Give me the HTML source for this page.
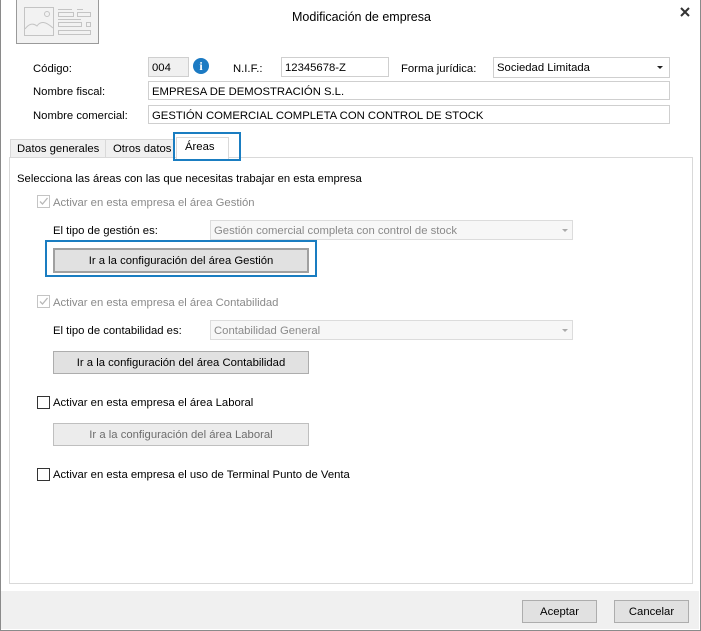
<!DOCTYPE html>
<html><head><meta charset="utf-8"><style>
*{box-sizing:border-box;margin:0;padding:0}
body{width:701px;height:631px;position:relative;background:#fff;font-family:"Segoe UI","Liberation Sans",sans-serif;font-size:11.3px;color:#000;overflow:hidden}
.a{position:absolute;white-space:nowrap}
.t{transform:translateY(2px)}
.in{position:absolute;border:1px solid #cfcfcf;background:#fff;padding:3px 3px 0;line-height:15px;white-space:nowrap}
.btn{position:absolute;border:1px solid #adadad;background:#e1e1e1;text-align:center;padding-top:1px}
.cb{position:absolute;width:13px;height:13px;border:1px solid #333;background:#fff}
.cbd{border-color:#c4c4c4}
.g{color:#8a8a8a}
.ck{position:absolute}
</style></head><body>
<div class="a" style="left:0;top:0;width:701px;height:631px;border:1px solid #8a8a8a;border-top:none"></div>
<div class="a" style="left:16px;top:-1px;width:83px;height:45px;border:1px solid #9a9a9a;background:#f2f2f2"></div>
<svg class="a" style="left:16px;top:0" width="83" height="44" viewBox="0 0 83 44">
<g fill="none" stroke="#c4c4c4" stroke-width="1">
<rect x="8.5" y="7.5" width="29" height="28"/>
<circle cx="31" cy="14" r="2.5"/>
<path d="M9 29 Q15 21 21 26 Q26 18 37 28"/>
<rect x="42.5" y="12.5" width="15" height="4"/><rect x="61.5" y="12.5" width="13" height="4"/>
<path d="M42 9.5h14M61 9.5h6"/>
<rect x="42.5" y="22.5" width="23" height="4"/><rect x="70.5" y="22.5" width="4" height="4"/>
<path d="M42 19.5h23"/>
<rect x="42.5" y="30.5" width="32" height="4"/>
</g></svg>
<div class="a t" style="left:292px;top:8px;font-size:12.5px">Modificación de empresa</div>
<svg class="a" style="left:680px;top:7px" width="10" height="10" viewBox="0 0 10 10"><path d="M1 1L9 9M9 1L1 9" stroke="#333" stroke-width="2"/></svg>

<div class="a t" style="left:33px;top:61px">Código:</div>
<div class="in" style="left:148px;top:57px;width:41px;height:20px;background:#f0f0f0">004</div>
<div class="a" style="left:193px;top:58px;width:16px;height:16px;border-radius:50%;background:#1b7ac3;color:#fff;font-weight:bold;font-size:12px;text-align:center;line-height:16px;font-family:'Liberation Serif',serif">i</div>
<div class="a t" style="left:233px;top:61px">N.I.F.:</div>
<div class="in" style="left:281px;top:57px;width:108px;height:20px">12345678-Z</div>
<div class="a t" style="left:401px;top:61px">Forma jurídica:</div>
<div class="in" style="left:493px;top:57px;width:177px;height:21px">Sociedad Limitada</div>
<div class="a" style="left:657px;top:66px;width:0;height:0;border-left:3px solid transparent;border-right:3px solid transparent;border-top:3px solid #222"></div>
<div class="a t" style="left:33px;top:84px">Nombre fiscal:</div>
<div class="in" style="left:148px;top:81px;width:522px;height:19px">EMPRESA DE DEMOSTRACIÓN S.L.</div>
<div class="a t" style="left:33px;top:108px">Nombre comercial:</div>
<div class="in" style="left:148px;top:105px;width:522px;height:19px">GESTIÓN COMERCIAL COMPLETA CON CONTROL DE STOCK</div>

<div class="a" style="left:9px;top:157px;width:684px;height:427px;border:1px solid #d9d9d9;background:#fff"></div>
<div class="a" style="left:10px;top:139px;width:96px;height:19px;border:1px solid #d9d9d9;background:#f0f0f0;padding:3px 0 0 6px">Datos generales</div>
<div class="a" style="left:105px;top:139px;width:70px;height:19px;border:1px solid #d9d9d9;background:#f0f0f0;padding:3px 0 0 7px">Otros datos</div>
<div class="a" style="left:176px;top:137px;width:53px;height:22px;border:1px solid #d9d9d9;border-bottom:none;background:#fff;padding:3px 0 0 8px">Áreas</div>
<div class="a" style="left:173px;top:132px;width:68px;height:29px;border:2px solid #1a7dc1"></div>

<div class="a t" style="left:17px;top:171px">Selecciona las áreas con las que necesitas trabajar en esta empresa</div>
<div class="cb cbd" style="left:37px;top:195px"></div>
<svg class="ck" style="left:37px;top:195px" width="13" height="13"><path d="M3 6.5L5.5 9L10.5 3" fill="none" stroke="#b8b8b8" stroke-width="1.3"/></svg>
<div class="a g t" style="left:53px;top:195px">Activar en esta empresa el área Gestión</div>
<div class="a t" style="left:53px;top:223px">El tipo de gestión es:</div>
<div class="in g" style="left:210px;top:220px;width:363px;height:20px;background:#f7f7f7;border-color:#dcdcdc">Gestión comercial completa con control de stock</div>
<div class="a" style="left:562px;top:229px;border-left:3px solid transparent;border-right:3px solid transparent;border-top:3px solid #aaa"></div>
<div class="a" style="left:45px;top:240px;width:272px;height:37px;border:2px solid #1a7dc1"></div>
<div class="btn" style="left:53px;top:248px;width:256px;height:25px;border:2px solid #a0a0a0;line-height:20px">Ir a la configuración del área Gestión</div>

<div class="cb cbd" style="left:37px;top:295px"></div>
<svg class="ck" style="left:37px;top:295px" width="13" height="13"><path d="M3 6.5L5.5 9L10.5 3" fill="none" stroke="#b8b8b8" stroke-width="1.3"/></svg>
<div class="a g t" style="left:53px;top:295px">Activar en esta empresa el área Contabilidad</div>
<div class="a t" style="left:53px;top:323px">El tipo de contabilidad es:</div>
<div class="in g" style="left:210px;top:320px;width:363px;height:20px;background:#f7f7f7;border-color:#dcdcdc">Contabilidad General</div>
<div class="a" style="left:562px;top:329px;border-left:3px solid transparent;border-right:3px solid transparent;border-top:3px solid #aaa"></div>
<div class="btn" style="left:53px;top:351px;width:256px;height:23px;line-height:21px">Ir a la configuración del área Contabilidad</div>

<div class="cb" style="left:37px;top:396px"></div>
<div class="a t" style="left:53px;top:395px">Activar en esta empresa el área Laboral</div>
<div class="btn" style="left:53px;top:423px;width:256px;height:23px;line-height:21px;background:#ececec;border-color:#bfbfbf;color:#6d6d6d">Ir a la configuración del área Laboral</div>

<div class="cb" style="left:37px;top:468px"></div>
<div class="a t" style="left:53px;top:467px">Activar en esta empresa el uso de Terminal Punto de Venta</div>

<div class="a" style="left:1px;top:591px;width:698px;height:38px;background:#f0f0f0"></div>
<div class="btn" style="left:522px;top:600px;width:75px;height:23px;line-height:21px">Aceptar</div>
<div class="btn" style="left:614px;top:600px;width:75px;height:23px;line-height:21px">Cancelar</div>
</body></html>
